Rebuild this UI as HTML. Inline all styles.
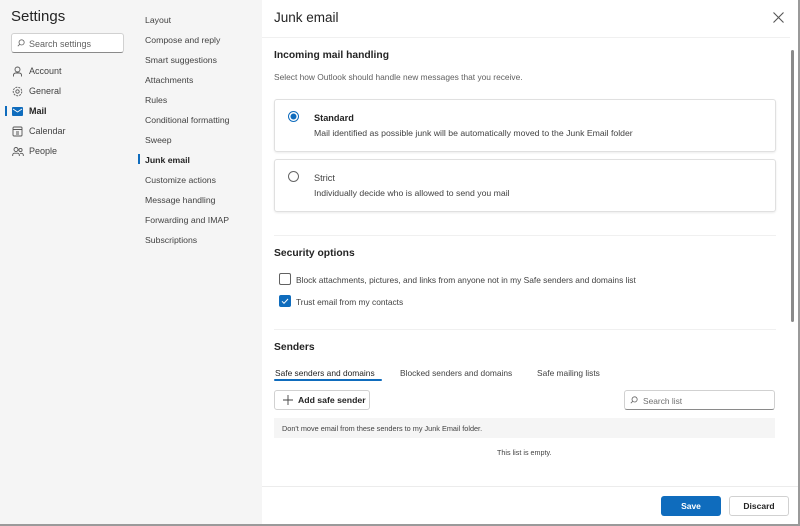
<!DOCTYPE html>
<html><head><style>
*{box-sizing:border-box;margin:0;padding:0}
body{width:800px;height:526px;overflow:hidden;font-family:"Liberation Sans",sans-serif;color:#242424;background:#fff;position:relative}
.a{position:absolute;white-space:nowrap}
.left{left:0;top:0;width:262px;height:526px;background:#f5f5f5}
.nav{font-size:9px;color:#424242}
.sub{font-size:8.7px;color:#424242}
.h{font-size:10.3px;font-weight:bold;color:#242424}
.t{font-size:8.4px;color:#424242}
.card{border:1px solid #e0e0e0;border-radius:3px;background:#fff;box-shadow:0 1px 2px rgba(0,0,0,.08)}
</style></head><body>
<div class="a left"></div>
<div class="a" style="left:11px;top:8px;font-size:15px;color:#242424">Settings</div>
<div class="a" style="left:11px;top:33px;width:113px;height:20px;background:#fff;border:1px solid #d1d1d1;border-bottom-color:#8a8a8a;border-radius:3px"></div>
<svg class="a" style="left:17px;top:39px" width="8" height="8" viewBox="0 0 8 8"><circle cx="4.6" cy="3.4" r="2.6" fill="none" stroke="#666" stroke-width=".8"/><path d="M2.8 5.2L.8 7.2" stroke="#666" stroke-width=".8"/></svg>
<div class="a nav" style="left:29px;top:39px;color:#616161">Search settings</div>
<svg class="a" style="left:12px;top:66px" width="11" height="11" viewBox="0 0 11 11" fill="none" stroke="#555" stroke-width=".9"><circle cx="5.5" cy="3.5" r="2.5"/><path d="M1.5 10.5v-1.5c0-1 1-2 2-2h4c1 0 2 1 2 2v1.5"/></svg>
<div class="a nav" style="left:29px;top:66px">Account</div>
<svg class="a" style="left:12px;top:86px" width="11" height="11" viewBox="0 0 11 11" fill="none" stroke="#555" stroke-width=".9"><circle cx="5.5" cy="5.5" r="1.7"/><circle cx="5.5" cy="5.5" r="4.3" stroke-dasharray="2 1"/></svg>
<div class="a nav" style="left:29px;top:86px">General</div>
<div class="a" style="left:5px;top:106px;width:2px;height:10px;background:#0f6cbd"></div>
<svg class="a" style="left:12px;top:107px" width="11" height="9" viewBox="0 0 11 9"><rect width="11" height="9" rx="1" fill="#0f6cbd"/><path d="M1 2l4.5 3L10 2" stroke="#fff" stroke-width=".9" fill="none"/></svg>
<div class="a nav" style="left:29px;top:106px;font-weight:bold;color:#242424">Mail</div>
<svg class="a" style="left:12px;top:126px" width="11" height="11" viewBox="0 0 11 11" fill="none" stroke="#555" stroke-width=".9"><rect x="1" y="1" width="9" height="9" rx="1"/><path d="M1 3.5h9M4 6h3M4 8h3"/></svg>
<div class="a nav" style="left:29px;top:126px">Calendar</div>
<svg class="a" style="left:12px;top:146px" width="12" height="11" viewBox="0 0 12 11" fill="none" stroke="#555" stroke-width=".9"><circle cx="4" cy="3.5" r="2"/><circle cx="8.5" cy="4" r="1.6"/><path d="M.7 10v-1c0-1 .8-1.8 1.8-1.8h3c1 0 1.8.8 1.8 1.8v1M8 7.3h1.5c1 0 1.8.8 1.8 1.8v.9"/></svg>
<div class="a nav" style="left:29px;top:146px">People</div>

<div class="a sub" style="left:145px;top:15px">Layout</div>
<div class="a sub" style="left:145px;top:35px">Compose and reply</div>
<div class="a sub" style="left:145px;top:55px">Smart suggestions</div>
<div class="a sub" style="left:145px;top:75px">Attachments</div>
<div class="a sub" style="left:145px;top:95px">Rules</div>
<div class="a sub" style="left:145px;top:115px">Conditional formatting</div>
<div class="a sub" style="left:145px;top:135px">Sweep</div>
<div class="a" style="left:138px;top:154px;width:2px;height:10px;background:#0f6cbd"></div>
<div class="a sub" style="left:145px;top:155px;font-weight:bold;color:#242424">Junk email</div>
<div class="a sub" style="left:145px;top:175px">Customize actions</div>
<div class="a sub" style="left:145px;top:195px">Message handling</div>
<div class="a sub" style="left:145px;top:215px">Forwarding and IMAP</div>
<div class="a sub" style="left:145px;top:235px">Subscriptions</div>

<div class="a" style="left:274px;top:10px;font-size:13.5px;color:#242424">Junk email</div>
<svg class="a" style="left:773px;top:12px" width="11" height="11" viewBox="0 0 11 11"><path d="M.5.5l10 10M10.5.5l-10 10" stroke="#555" stroke-width="1.1"/></svg>
<div class="a" style="left:262px;top:37px;width:528px;height:1px;background:#f0f0f0"></div>
<div class="a" style="left:791px;top:50px;width:3px;height:272px;background:#8a8a8a;border-radius:2px"></div>
<div class="a" style="left:798px;top:0;width:2px;height:526px;background:#9a9a9a"></div>
<div class="a" style="left:0;top:524px;width:800px;height:2px;background:#9a9a9a"></div>

<div class="a h" style="left:274px;top:50px">Incoming mail handling</div>
<div class="a t" style="left:274px;top:72px;color:#616161">Select how Outlook should handle new messages that you receive.</div>
<div class="a card" style="left:274px;top:99px;width:502px;height:53px"></div>
<svg class="a" style="left:288px;top:111px" width="11" height="11"><circle cx="5.5" cy="5.5" r="5" fill="#fff" stroke="#0f6cbd"/><circle cx="5.5" cy="5.5" r="3" fill="#0f6cbd"/></svg>
<div class="a" style="left:314px;top:113px;font-size:9.2px;font-weight:bold">Standard</div>
<div class="a t" style="left:314px;top:128px;font-size:8.7px">Mail identified as possible junk will be automatically moved to the Junk Email folder</div>
<div class="a card" style="left:274px;top:159px;width:502px;height:53px"></div>
<svg class="a" style="left:288px;top:171px" width="11" height="11"><circle cx="5.5" cy="5.5" r="5" fill="#fff" stroke="#666"/></svg>
<div class="a" style="left:314px;top:173px;font-size:9.2px;color:#424242">Strict</div>
<div class="a t" style="left:314px;top:188px;font-size:8.7px">Individually decide who is allowed to send you mail</div>
<div class="a" style="left:274px;top:235px;width:502px;height:1px;background:#f0f0f0"></div>
<div class="a h" style="left:274px;top:248px">Security options</div>
<div class="a" style="left:279px;top:273px;width:12px;height:12px;border:1px solid #616161;border-radius:2px"></div>
<div class="a t" style="left:296px;top:275px">Block attachments, pictures, and links from anyone not in my Safe senders and domains list</div>
<svg class="a" style="left:279px;top:295px" width="12" height="12"><rect width="12" height="12" rx="2" fill="#0f6cbd"/><path d="M3 6.3l2 2 4-4.3" stroke="#fff" stroke-width="1" fill="none"/></svg>
<div class="a t" style="left:296px;top:297px">Trust email from my contacts</div>
<div class="a" style="left:274px;top:329px;width:502px;height:1px;background:#f0f0f0"></div>
<div class="a h" style="left:274px;top:342px">Senders</div>
<div class="a t" style="left:275px;top:368px;color:#242424">Safe senders and domains</div>
<div class="a" style="left:274px;top:379px;width:108px;height:2px;background:#0f6cbd;border-radius:1px"></div>
<div class="a t" style="left:400px;top:368px">Blocked senders and domains</div>
<div class="a t" style="left:537px;top:368px">Safe mailing lists</div>
<div class="a" style="left:274px;top:390px;width:96px;height:20px;border:1px solid #d1d1d1;border-radius:3px;background:#fff"></div>
<svg class="a" style="left:283px;top:395px" width="10" height="10"><path d="M5 0v10M0 5h10" stroke="#424242" stroke-width=".9"/></svg>
<div class="a" style="left:298px;top:395px;font-size:8.7px;font-weight:bold">Add safe sender</div>
<div class="a" style="left:624px;top:390px;width:151px;height:20px;border:1px solid #d1d1d1;border-bottom-color:#8a8a8a;border-radius:3px;background:#fff"></div>
<svg class="a" style="left:630px;top:396px" width="8" height="8" viewBox="0 0 8 8"><circle cx="4.6" cy="3.4" r="2.6" fill="none" stroke="#666" stroke-width=".8"/><path d="M2.8 5.2L.8 7.2" stroke="#666" stroke-width=".8"/></svg>
<div class="a t" style="left:643px;top:396px;color:#707070">Search list</div>
<div class="a" style="left:274px;top:418px;width:501px;height:20px;background:#f5f5f5"></div>
<div class="a" style="left:282px;top:424px;font-size:7.3px;color:#424242">Don't move email from these senders to my Junk Email folder.</div>
<div class="a" style="left:497px;top:448px;font-size:7.2px;color:#424242">This list is empty.</div>
<div class="a" style="left:262px;top:486px;width:536px;height:1px;background:#ececec"></div>
<div class="a" style="left:661px;top:496px;width:60px;height:20px;background:#0f6cbd;border-radius:3px;color:#fff;font-size:8.5px;font-weight:bold;text-align:center;line-height:20px">Save</div>
<div class="a" style="left:729px;top:496px;width:60px;height:20px;border:1px solid #d1d1d1;border-radius:3px;font-size:8.5px;font-weight:bold;text-align:center;line-height:18px">Discard</div>
</body></html>
